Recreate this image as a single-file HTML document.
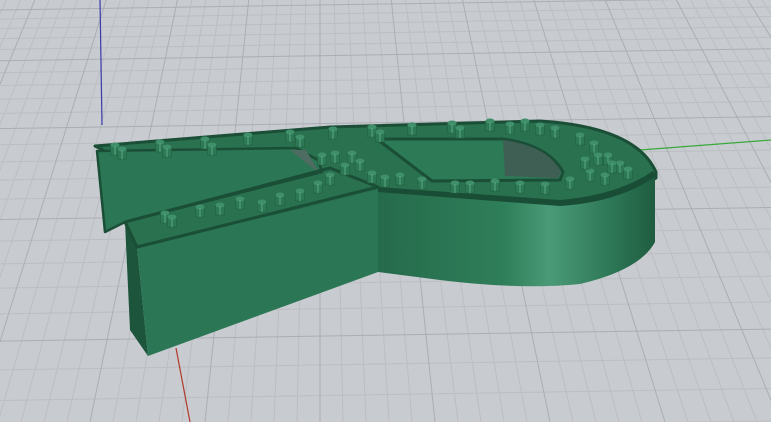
<!DOCTYPE html>
<html><head><style>
html,body{margin:0;padding:0;width:771px;height:422px;overflow:hidden;background:#c8cbcf}
</style></head><body>
<svg id="s" width="771" height="422" viewBox="0 0 771 422" xmlns="http://www.w3.org/2000/svg">
<rect width="771" height="422" fill="#c8cbcf"/>
<g id="grid" stroke="#bbbec2" stroke-width="1" fill="none"></g>
<g id="grid2" stroke="#abaeb2" stroke-width="1" fill="none"></g>
<line x1="100" y1="0" x2="102" y2="125" stroke="#3a3aa8" stroke-width="1.2"/>
<line x1="640" y1="150" x2="771" y2="140" stroke="#3aa83a" stroke-width="1.2"/>
<line x1="176" y1="348" x2="190" y2="422" stroke="#b03a2a" stroke-width="1.2"/>
<defs>
<linearGradient id="bowl" x1="0" x2="1" y1="0" y2="0">
<stop offset="0" stop-color="#256b4b"/><stop offset="0.45" stop-color="#2f7e5a"/>
<stop offset="0.62" stop-color="#4a9a77"/><stop offset="0.85" stop-color="#2c7655"/><stop offset="1" stop-color="#1f5c40"/>
</linearGradient>
</defs>
<path d="M95,146 L330,127 L540,121 Q636,127 656,172 L656,178 Q620,200 560,205 L378,192 L137,247 L125,222 L103,150 Z" fill="#2a7150" stroke="#1a4e36" stroke-width="3" stroke-linejoin="round"/>
<polygon points="97,151 296,148 318,160 322,172 125,222 105,232" fill="#2b7654" stroke="#1a4e36" stroke-width="2.5" stroke-linejoin="round"/>
<polygon points="290,150 306,150 320,174 Z" fill="#4f6c62"/>
<path d="M377,139 L503,139 Q548,145 563,172 L560,180 L432,181 Z" fill="#2d7a56" stroke="#1a4e36" stroke-width="3" stroke-linejoin="round"/>
<path d="M503,140 Q548,146 561,172 L558,178 L505,176 Z" fill="#3f5f55"/>
<polygon points="125,222 137,247 148,356 130,330" fill="#1c553b"/>
<polygon points="137,247 378,190 378,272 148,356" fill="#2b7654"/>
<path d="M378,190 L560,205 Q620,200 655,175 L655,242 Q640,270 580,284 Q520,290 440,280 L378,272 Z" fill="url(#bowl)"/>
<path d="M378,187 L560,200 Q618,195 653,171 L656,176 Q620,202 560,206 L378,192 Z" fill="#194d35"/>
<path d="M125,222 L330,168 L378,187 L137,247 Z" fill="none" stroke="#1a4e36" stroke-width="3" stroke-linejoin="round"/>
<g id="studs"></g>
</svg>
<script>
var g=document.getElementById('grid'),g2=document.getElementById('grid2'),ns='http://www.w3.org/2000/svg';
function L(p,a,b,c,d){var l=document.createElementNS(ns,'line');l.setAttribute('x1',a);l.setAttribute('y1',b);l.setAttribute('x2',c);l.setAttribute('y2',d);p.appendChild(l);}
var y=2,s=9,k=0;while(y<440){L(k%5==0?g2:g,0,y+8,771,y-4);y+=s;s*=1.06;k++;}
for(var i=-40;i<60;i++){var xb=320+i*23;L(i%5==0?g2:g,320+(xb-320)*0.62,0,xb,422);}
var st=document.getElementById('studs');
function stud(x,y){
 var b=document.createElementNS(ns,'rect');b.setAttribute('x',x-4.5);b.setAttribute('y',y-5);b.setAttribute('width',9);b.setAttribute('height',10);b.setAttribute('fill','#2d7855');b.setAttribute('stroke','#22603f');b.setAttribute('stroke-width','0.6');st.appendChild(b);
 var t=document.createElementNS(ns,'ellipse');t.setAttribute('cx',x);t.setAttribute('cy',y-5);t.setAttribute('rx',4.5);t.setAttribute('ry',2.5);t.setAttribute('fill','#3f8f6b');st.appendChild(t);
 var h=document.createElementNS(ns,'line');h.setAttribute('x1',x);h.setAttribute('y1',y-4);h.setAttribute('x2',x);h.setAttribute('y2',y+5);h.setAttribute('stroke','#5aa887');h.setAttribute('stroke-width','1');st.appendChild(h);
}
var pts=[[115,150],[122,154],[160,147],[167,152],[205,144],[212,150],[248,140],[290,137],[300,142],[333,134],[372,132],[380,137],[412,130],[452,128],[460,133],[490,126],[510,129],[525,126],[540,130],[555,133],[580,140],[594,148],[608,160],[620,168],[628,174],
[165,218],[172,222],[200,212],[220,210],[240,204],[262,207],[280,200],[300,196],[318,188],[330,180],[345,170],[352,158],[360,166],[335,158],[322,160],[372,178],[385,182],[400,180],[422,184],[455,188],[470,188],[495,186],[520,188],[545,189],[570,184],[590,176],[605,180],[612,168],[598,160],[585,164]];
pts.forEach(function(p){stud(p[0],p[1]);});
</script>
</body></html>
